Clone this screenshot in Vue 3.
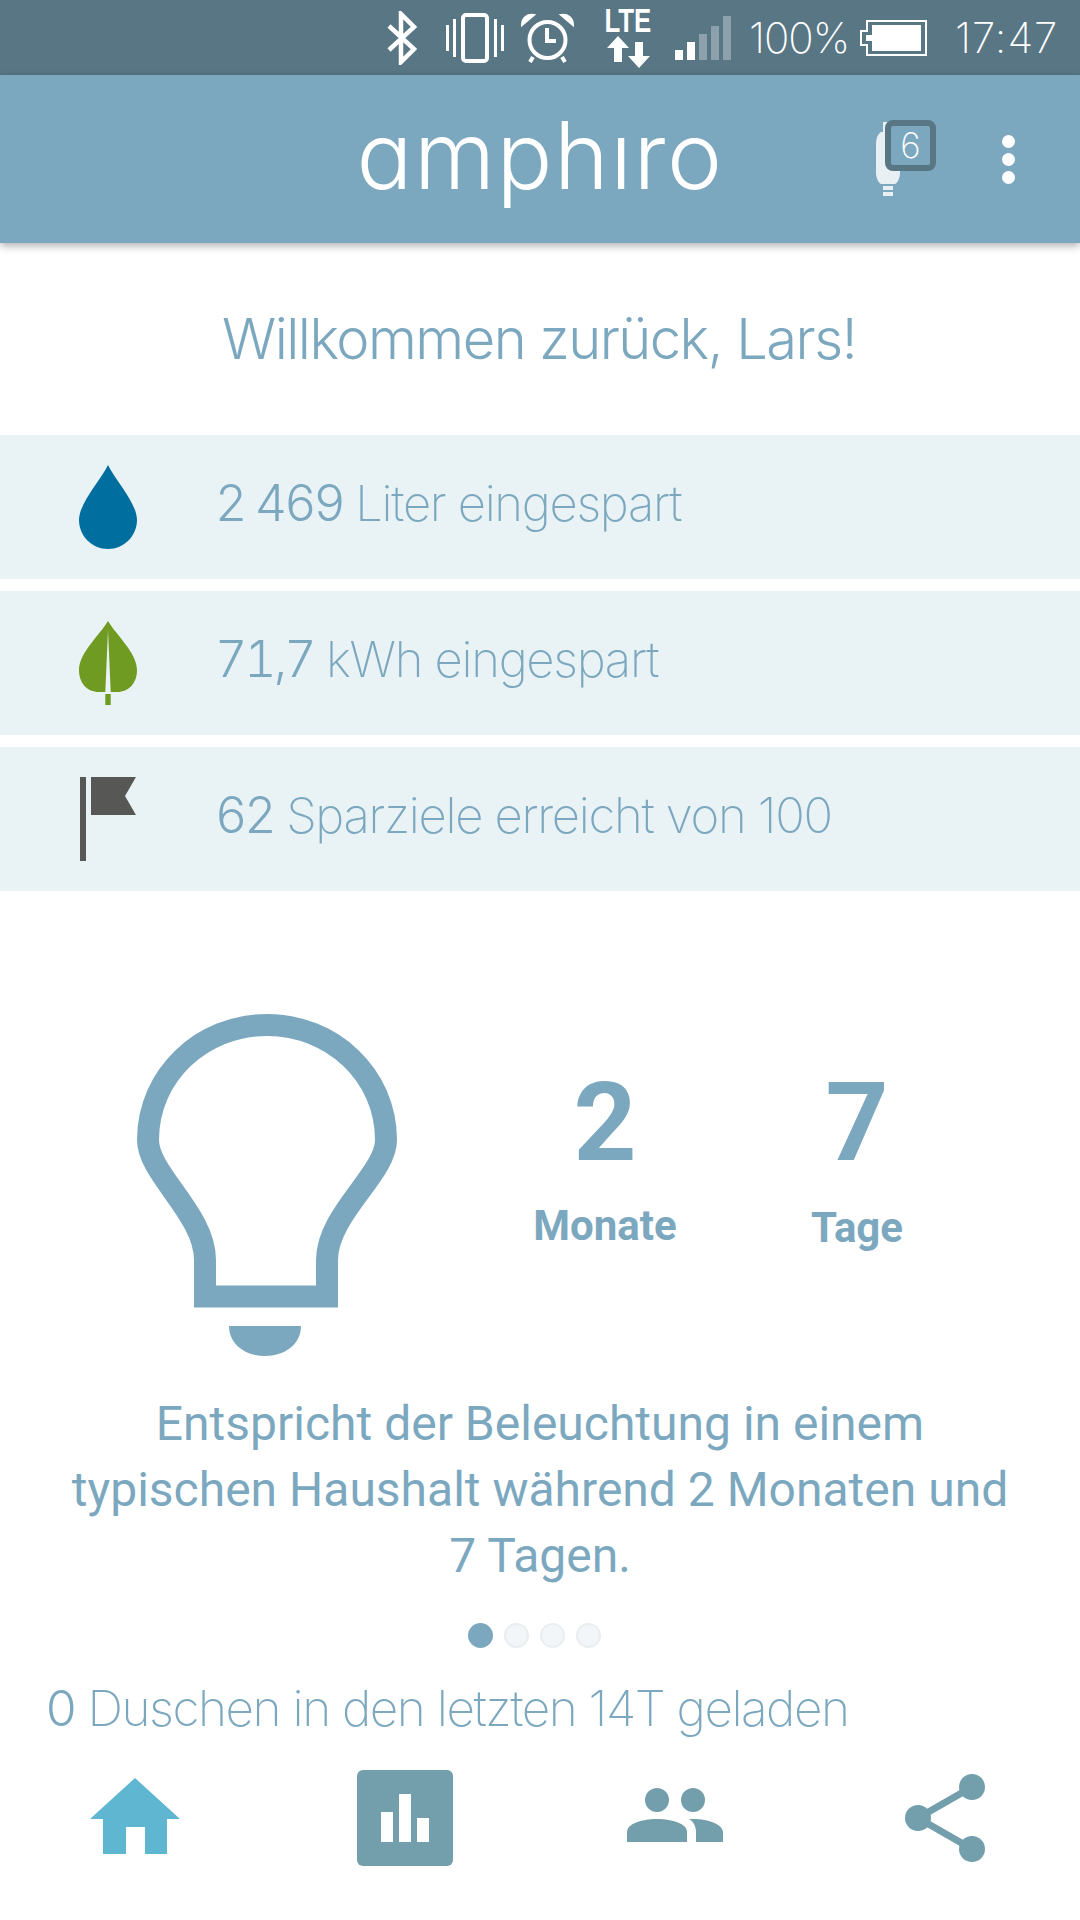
<script setup>
const rows = [
  { icon: 'drop', value: '2 469', label: 'Liter eingespart' },
  { icon: 'leaf', value: '71,7', label: 'kWh eingespart' },
  { icon: 'flag', value: '62', label: 'Sparziele erreicht von 100' },
]
</script>

<template>
  <div class="screen">
    <!-- status bar -->
    <div class="status">
      <svg class="st-bt" width="30" height="54" viewBox="0 0 30 54" fill="none" stroke="#fff" stroke-width="4.5">
        <path d="M2 15 L27 38 L14 51 V3 L27 16 L2 39" />
      </svg>
      <svg class="st-vib" width="58" height="50" viewBox="0 0 58 50" fill="#fff">
        <rect x="0" y="12" width="3" height="26" />
        <rect x="7" y="6" width="3" height="38" />
        <rect x="48" y="6" width="3" height="38" />
        <rect x="55" y="12" width="3" height="26" />
        <rect x="17" y="2" width="24" height="46" rx="3" fill="none" stroke="#fff" stroke-width="4" />
      </svg>
      <svg class="st-alarm" width="53" height="50" viewBox="0 0 53 50" fill="none" stroke="#fff" stroke-width="4">
        <circle cx="26.500" cy="27" r="18" />
        <path d="M26 15 V28 H35" />
        <path d="M12 44 L9 49 M41 44 L44 49" />
        <path d="M1 12 C1 5 6 1 13 2 Z M52 12 C52 5 47 1 40 2 Z" fill="#fff" stroke-width="2" />
      </svg>
      <div class="st-lte">
        <span class="lte-text">LTE</span>
        <svg width="46" height="32" viewBox="0 0 46 32" fill="#fff">
          <path d="M13 0 L24 12 H17 V26 H9 V12 H2 Z" />
          <path d="M34 32 L45 20 H38 V6 H30 V20 H23 Z" />
        </svg>
      </div>
      <svg class="st-sig" width="56" height="44" viewBox="0 0 56 44">
        <rect x="0" y="34" width="8" height="10" fill="#fff" />
        <rect x="12" y="26" width="8" height="18" fill="#fff" />
        <rect x="24" y="18" width="8" height="26" fill="#8ca1ab" />
        <rect x="36" y="10" width="8" height="34" fill="#8ca1ab" />
        <rect x="48" y="0" width="8" height="44" fill="#8ca1ab" />
      </svg>
      <span class="st-text st-pct">100%</span>
      <svg class="st-bat" width="67" height="36" viewBox="0 0 67 36" fill="#fff">
        <path d="M7 1 H66 V35 H7 V25 H1 V11 H7 Z" fill="none" stroke="#fff" stroke-width="2" />
        <path d="M12 5 H61 V31 H12 V21 H6 V15 H12 Z" />
      </svg>
      <span class="st-text st-time">17:47</span>
    </div>

    <!-- app bar -->
    <header class="appbar">
      <span class="logo">amphıro</span>
      <div class="device">
        <svg width="26" height="74" viewBox="0 0 26 74" fill="#e8f0f4">
          <rect x="8" y="0" width="10" height="10" />
          <path d="M6 10 H20 C24 12 25 16 25 22 V50 C25 56 23 60 20 62 H6 C3 60 1 56 1 50 V22 C1 16 3 12 6 10 Z" />
          <rect x="8" y="64" width="10" height="4" />
          <rect x="8" y="70" width="10" height="4" />
        </svg>
        <span class="badge">6</span>
      </div>
      <div class="menu"><i></i><i></i><i></i></div>
    </header>

    <h1 class="welcome">Willkommen zurück, Lars!</h1>

    <!-- savings rows -->
    <div class="rows">
      <div v-for="row in rows" :key="row.icon" class="row">
        <svg class="row-icon" width="58" height="84" viewBox="0 0 58 84">
          <path v-if="row.icon === 'drop'" fill="#006f9f" d="M29 0 C36 15 58 38 58 55 C58 71 45 84 29 84 C13 84 0 71 0 55 C0 38 22 15 29 0 Z" />
          <g v-else-if="row.icon === 'leaf'" fill="#709b22">
            <path d="M29 0 C38 15 58 32 58 49 C58 62 50 71 38 71 H20 C8 71 0 62 0 49 C0 32 20 15 29 0 Z" />
            <path d="M29 9 L31.700 71 H26.300 Z" fill="#e9f2f5" />
            <rect x="26.300" y="73" width="5.400" height="11" />
          </g>
          <g v-else fill="#575756">
            <rect x="1" y="0" width="6" height="84" />
            <path d="M12 0 H57 L46 19 L57 38 H12 Z" />
          </g>
        </svg>
        <p class="row-text"><span class="row-value">{{ row.value }}</span> {{ row.label }}</p>
      </div>
    </div>

    <!-- equivalent -->
    <section class="hero">
      <svg class="bulb" width="260" height="342" viewBox="0 0 260 342" fill="#7ca8bf">
        <path fill="none" stroke="#7ca8bf" stroke-width="22" d="M68 282.500 V246 C68 200 11 160 11 126 C11 61 65 11 130 11 C195 11 249 61 249 126 C249 160 190 200 190 246 V282.500 Z" />
        <path d="M92 312 H164 C164 330 148 342 128 342 C108 342 92 330 92 312 Z" />
      </svg>
      <div class="stat stat-months">
        <span class="stat-num">2</span>
        <span class="stat-unit">Monate</span>
      </div>
      <div class="stat stat-days">
        <span class="stat-num">7</span>
        <span class="stat-unit">Tage</span>
      </div>
    </section>

    <p class="desc">Entspricht der Beleuchtung in einem typischen Haushalt während 2 Monaten und 7 Tagen.</p>

    <div class="dots">
      <i class="dot active"></i><i class="dot"></i><i class="dot"></i><i class="dot"></i>
    </div>

    <p class="loaded"><span class="loaded-num">0</span> Duschen in den letzten 14T geladen</p>

    <!-- bottom nav -->
    <nav class="nav">
      <svg class="nav-home" width="90" height="76" viewBox="0 0 90 76" fill="#5eb6d1">
        <path fill-rule="evenodd" d="M45 0 L90 41 H77 V76 H55 V49 H36 V76 H13 V41 H0 Z" />
      </svg>
      <svg width="96" height="96" viewBox="0 0 96 96">
        <rect width="96" height="96" rx="6" fill="#739eac" />
        <path fill="#fff" d="M24 42 H36 V72 H24 Z M42 24 H54 V72 H42 Z M60 48 H72 V72 H60 Z" />
      </svg>
      <svg class="nav-group" width="96" height="54" viewBox="0 0 96 54" fill="#739eac">
        <circle cx="30" cy="12" r="12" />
        <circle cx="66" cy="12" r="12" />
        <path d="M0 54 V44 C0 36 14 31 30 31 C46 31 60 36 60 44 V54 Z" />
        <path d="M69 54 V44 C69 39 67 34 62 31 C80 30 96 36 96 44 V54 Z" />
      </svg>
      <svg width="80" height="90" viewBox="0 0 80 90" fill="#739eac" stroke="#739eac">
        <path d="M67 14 L13 45 L67 76" fill="none" stroke-width="7" />
        <circle cx="67" cy="14" r="13" stroke="none" />
        <circle cx="13" cy="45" r="13" stroke="none" />
        <circle cx="67" cy="76" r="13" stroke="none" />
      </svg>
    </nav>
  </div>
</template>

<style scoped>
.screen {
  width: 1080px;
  height: 1920px;
  background: #fff;
  overflow: hidden;
  font-family: Roboto, "Liberation Sans", sans-serif;
  color: #7ca8bf;
}

.status {
  height: 75px;
  background: #587684;
  display: flex;
  align-items: center;
  padding-left: 387px;
  color: #fff;
}
.st-bt { flex: none; }
.st-vib { margin-left: 29px; flex: none; }
.st-alarm { margin-left: 17px; flex: none; }
.st-lte {
  margin-left: 29px;
  width: 49px;
  display: flex;
  flex-direction: column;
  align-items: center;
}
.lte-text {
  font: bold 34px/27px "Liberation Sans", sans-serif;
  transform: scaleX(0.76);
  margin-bottom: 2px;
}
.st-sig { margin-left: 23px; flex: none; }
.st-text {
  font-family: Inter, sans-serif;
  font-weight: 150;
  font-size: 42px;
  line-height: 75px;
  white-space: nowrap;
}
.st-pct { margin-left: 18px; width: 99px; letter-spacing: -1px; }
.st-bat { margin-left: 12px; flex: none; }
.st-time { margin-left: 28px; letter-spacing: 1px; }

.appbar {
  position: relative;
  height: 168px;
  background: #7ca8bf;
  box-shadow: 0 3px 8px rgba(0, 0, 0, 0.3);
  display: flex;
  align-items: center;
  justify-content: center;
}
.logo {
  font-family: Inter, sans-serif;
  font-weight: 300;
  font-size: 93px;
  letter-spacing: 1.500px;
  font-feature-settings: "cv11";
  color: #fff;
  margin-top: -8px;
}
.device {
  position: absolute;
  left: 875px;
  top: 45px;
}
.device svg { position: absolute; left: 0; top: 2px; }
.badge {
  position: absolute;
  left: 10px;
  top: 0;
  box-sizing: border-box;
  width: 51px;
  height: 51px;
  border: 6px solid #587684;
  border-radius: 8px;
  background: #7ca8bf;
  color: #fff;
  font-family: Inter, sans-serif;
  font-weight: 150;
  font-size: 35px;
  line-height: 39px;
  text-align: center;
}
.menu {
  position: absolute;
  left: 1002px;
  top: 60px;
  display: flex;
  flex-direction: column;
  gap: 5px;
}
.menu i {
  width: 13px;
  height: 13px;
  border-radius: 50%;
  background: #fff;
}

.welcome {
  margin: 0;
  height: 192px;
  padding-right: 2px;
  display: flex;
  align-items: center;
  justify-content: center;
  font-family: Inter, sans-serif;
  font-weight: 300;
  font-size: 56px;
  letter-spacing: -1.500px;
}

.rows {
  display: flex;
  flex-direction: column;
  gap: 12px;
}
.row {
  height: 144px;
  background: #e9f2f5;
  display: flex;
  align-items: center;
  padding-left: 79px;
}
.row-icon { flex: none; }
.row-text {
  margin: -9px 0 0 78px;
  font-family: Inter, sans-serif;
  font-weight: 200;
  font-size: 49px;
  letter-spacing: -1.300px;
}
.row-value {
  font-weight: 300;
  font-size: 50px;
  letter-spacing: -3px;
  font-feature-settings: "tnum";
}

.hero {
  display: flex;
  padding: 123px 0 0 137px;
  height: 356px;
}
.bulb { flex: none; }
.stat {
  width: 252px;
  display: flex;
  flex-direction: column;
  align-items: center;
  font-weight: 700;
}
.stat-months { margin-left: 82px; }
.stat-num { font-size: 110px; line-height: 110px; margin-top: 54px; }
.stat-unit { font-size: 42px; line-height: 50px; margin-top: 23px; }
.stat-days .stat-unit { margin-top: 25px; }

.desc {
  margin: 21px 0 0;
  padding: 0 60px;
  font-size: 48px;
  line-height: 66px;
  text-align: center;
  height: 198px;
}

.dots {
  display: flex;
  justify-content: center;
  gap: 11px;
  padding: 34px 12px 0 0;
  height: 25px;
}
.dot {
  width: 25px;
  height: 25px;
  border-radius: 50%;
  box-sizing: border-box;
  background: #f2f6f8;
  border: 2px solid #e9eef0;
}
.dot.active { background: #7ca8bf; border-color: #7ca8bf; }

.loaded {
  margin: 25px 0 0;
  padding-left: 46px;
  font-family: Inter, sans-serif;
  font-weight: 150;
  font-size: 49.500px;
  line-height: 70px;
  letter-spacing: -1.500px;
}
.loaded-num { font-weight: 300; }

.nav {
  display: grid;
  grid-template-columns: repeat(4, 270px);
  justify-items: center;
  align-items: center;
  height: 96px;
  margin-top: 27px;
}
.nav-home { margin-bottom: 4px; }
.nav-group { margin-bottom: 6px; }
</style>
